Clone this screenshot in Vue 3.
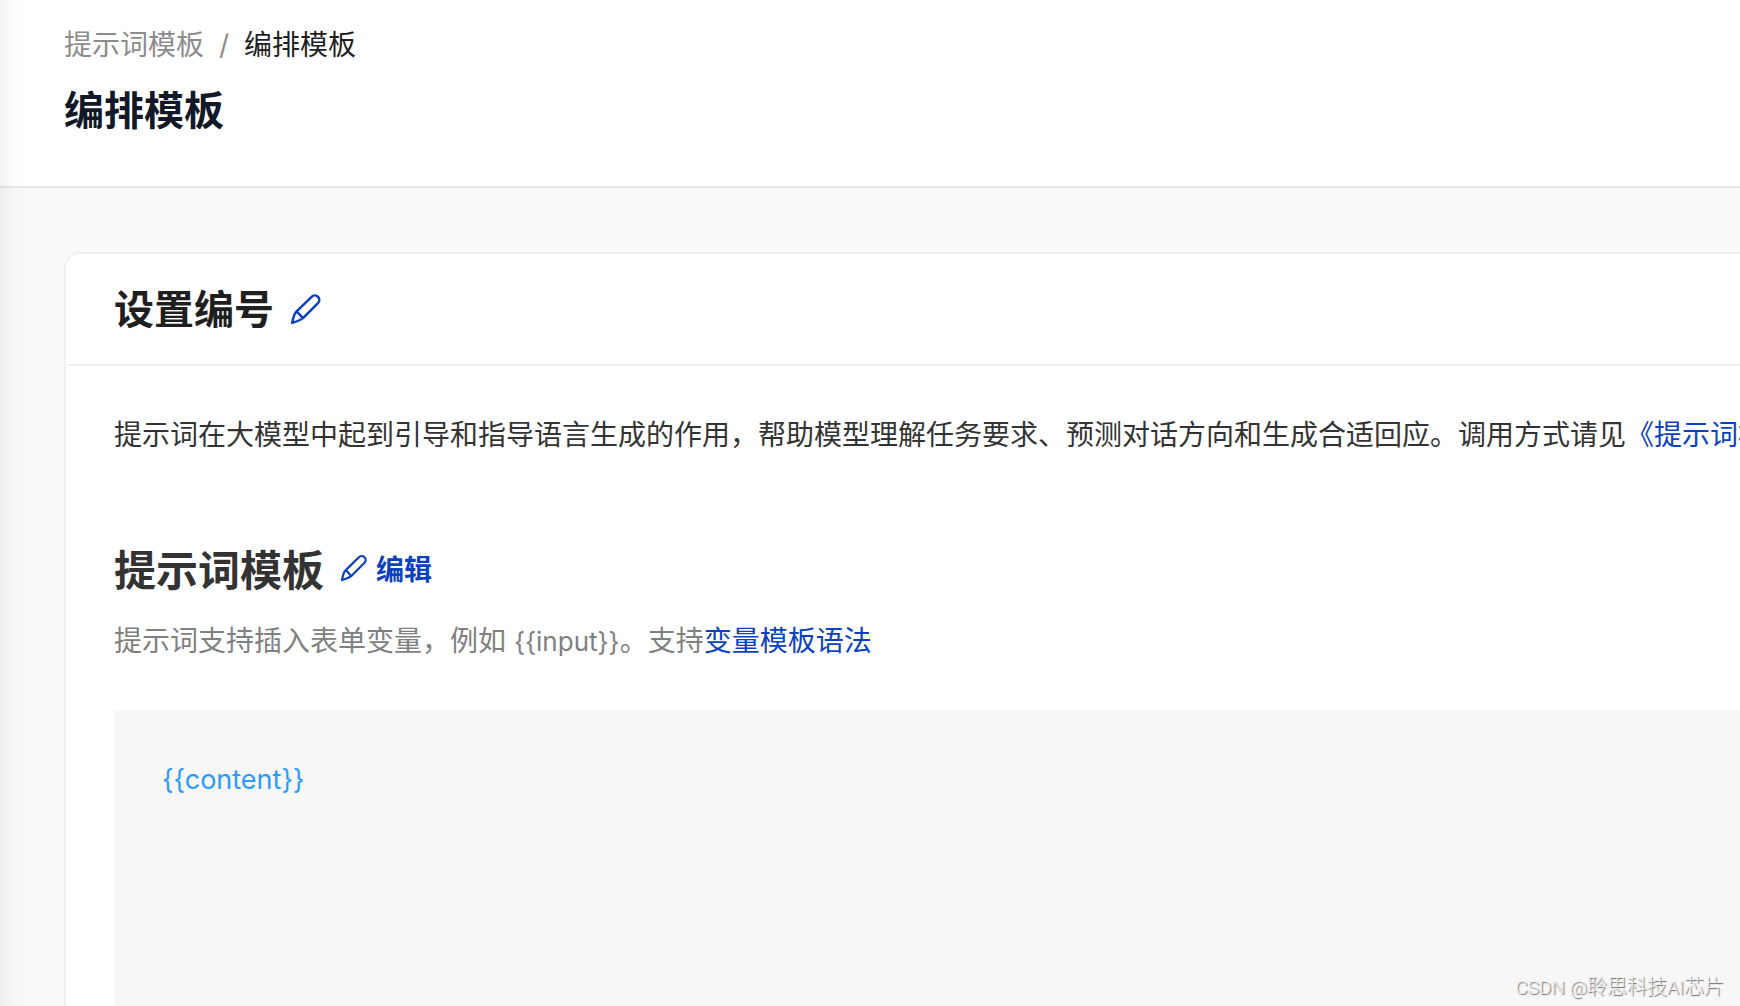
<script setup>
const placeholder = '{{input}}'
const template = '{{content}}'
</script>

<template>
  <div class="page">
    <header class="page-header">
      <nav class="breadcrumb" aria-label="面包屑">
        <a href="#" class="crumb">提示词模板</a>
        <span class="slash">/</span>
        <span class="current">编排模板</span>
      </nav>
      <h1>编排模板</h1>
    </header>

    <main class="body">
      <section class="card">
        <div class="card-header">
          <h2>设置编号</h2>
          <button type="button" class="icon-button" aria-label="修改编号">
            <svg class="pencil" viewBox="0 0 32 32" aria-hidden="true">
              <path d="M6.6 18.4 21.6 3.8A4.45 4.45 0 0 1 28 10.1L13 25.1Q10 27.6 2.2 29.8Q3.8 21 6.6 18.4L13 25.1" />
            </svg>
          </button>
        </div>

        <div class="card-body">
          <p class="intro">提示词在大模型中起到引导和指导语言生成的作用，帮助模型理解任务要求、预测对话方向和生成合适回应。调用方式请见<a href="#">《提示词模板》</a></p>

          <div class="section-title">
            <h3>提示词模板</h3>
            <button type="button" class="edit-button">
              <svg class="pencil small" viewBox="0 0 32 32" aria-hidden="true">
                <path d="M6.6 18.4 21.6 3.8A4.45 4.45 0 0 1 28 10.1L13 25.1Q10 27.6 2.2 29.8Q3.8 21 6.6 18.4L13 25.1" />
              </svg>
              <span>编辑</span>
            </button>
          </div>
          <p class="hint">提示词支持插入表单变量，例如 <span class="variable">{{ placeholder }}</span>。支持<a href="#">变量模板语法</a></p>

          <div class="preview">{{ template }}</div>
        </div>
      </section>
    </main>

    <div class="watermark"><span>CSDN @</span>聆思科技<span>AI</span>芯片</div>
  </div>
</template>

<style>
body {
  margin: 0;
}
</style>

<style scoped>
.page {
  position: relative;
  display: flex;
  flex-direction: column;
  height: 100vh;
  overflow: hidden;
  background: #f9fafc;
  color: #333;
  font-family: Inter, "Noto Sans CJK SC", sans-serif;
  font-size: 28px;
  line-height: 44px;
}

.page::before {
  content: "";
  position: absolute;
  inset: 0 auto 0 0;
  width: 28px;
  background: linear-gradient(to right, rgba(0, 0, 0, 0.05), rgba(0, 0, 0, 0.02) 40%, transparent);
  pointer-events: none;
}

h1,
h2,
h3,
p {
  margin: 0;
}

h1,
h2 {
  font-size: 40px;
  line-height: 56px;
}

a {
  color: #0b41bd;
  text-decoration: none;
}

button {
  display: flex;
  align-items: center;
  padding: 0;
  border: 0;
  background: none;
  color: #0b41bd;
  font: inherit;
  cursor: pointer;
}

.page-header {
  padding: 23px 64px 47px;
  border-bottom: 2px solid #e5e7ea;
  background: #fff;
}

.breadcrumb {
  display: flex;
  gap: 15px;
}

.breadcrumb .crumb,
.slash {
  color: #8c8c8c;
}

.current {
  color: #1f1f1f;
}

h1 {
  margin-top: 16px;
  color: #111827;
}

.body {
  flex: 1;
  display: flex;
  min-height: 0;
  padding: 64px 0 0 64px;
}

.card {
  flex: 1;
  display: flex;
  flex-direction: column;
  min-width: 0;
  border: 2px solid #f0f0f0;
  border-width: 2px 0 0 2px;
  border-radius: 16px 0 0 0;
  background: #fff;
}

.card-header {
  display: flex;
  align-items: center;
  gap: 16px;
  padding: 28px 48px 26px;
  border-bottom: 2px solid #f0f0f0;
}

h2 {
  color: #1f1f1f;
}

.pencil {
  width: 32px;
  height: 32px;
  margin-bottom: 2px;
  fill: none;
  stroke: currentColor;
  stroke-width: 2.5;
  stroke-linejoin: round;
}

.pencil.small {
  width: 28px;
  height: 28px;
  margin-bottom: 4px;
}

.card-body {
  flex: 1;
  display: flex;
  flex-direction: column;
  min-width: 0;
  padding: 47px 0 0 48px;
}

.intro {
  overflow: hidden;
  white-space: nowrap;
}

.section-title {
  display: flex;
  align-items: center;
  gap: 16px;
  margin-top: 84px;
}

h3 {
  font-size: 42px;
  line-height: 60px;
}

.edit-button {
  gap: 8px;
  margin-bottom: 2px;
  font-weight: 700;
}

.hint {
  margin-top: 18px;
  color: #808080;
}

.variable {
  font-size: 26px;
}

.preview {
  flex: 1;
  margin-top: 46px;
  padding: 48px;
  background: #f7f7f7;
  color: #2b9bff;
  font-size: 27px;
}

.watermark {
  position: absolute;
  right: 16px;
  bottom: 4px;
  color: #eee;
  font-family: Roboto, "Noto Sans CJK SC", sans-serif;
  font-size: 20px;
  font-weight: 300;
  line-height: 28px;
  text-shadow: 1px 1px 1px #666;
}

.watermark span {
  font-size: 19px;
}
</style>
